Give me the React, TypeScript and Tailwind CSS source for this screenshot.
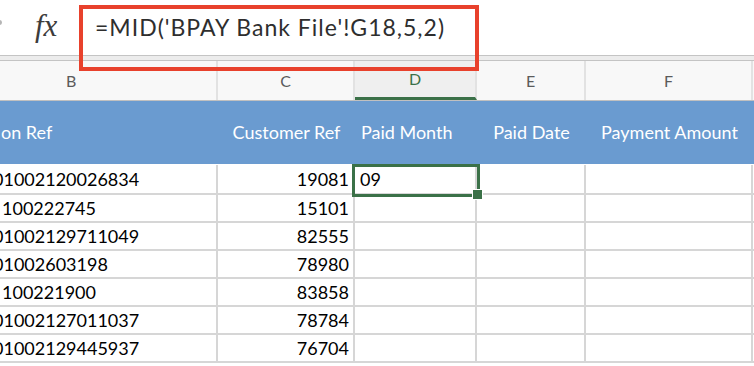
const rows = [
  { ref: "01002120026834", clipped: true, cust: "19081" },
  { ref: "100222745", clipped: false, cust: "15101" },
  { ref: "01002129711049", clipped: true, cust: "82555" },
  { ref: "01002603198", clipped: true, cust: "78980" },
  { ref: "100221900", clipped: false, cust: "83858" },
  { ref: "01002127011037", clipped: true, cust: "78784" },
  { ref: "01002129445937", clipped: true, cust: "76704" },
];

const font = { fontFamily: "Lato, 'Open Sans', sans-serif" };

export default function App() {
  return (
    <div
      className="relative h-[366px] w-[754px] overflow-hidden bg-white"
      style={font}
    >
      {/* formula bar */}
      <div className="relative flex h-[55px] items-center">
        <div className="absolute left-[-3px] top-[20px] h-[5px] w-[5px] rounded-full bg-[#b5b5b5]" />
        <span
          className="ml-[35px] w-[46px] pb-[2px] text-[31px] italic text-[#3c3c3c]"
          style={{ fontFamily: "'Liberation Serif', serif" }}
        >
          fx
        </span>
        <span className="ml-[14px] text-[23px] tracking-[1px] text-[#2e2e2e]">
          =MID('BPAY Bank File'!G18,5,2)
        </span>
      </div>
      <div className="h-[6px] border-y border-[#c4c4c4] bg-[#ececec]" />

      {/* column letters */}
      <div className="flex h-[40px] border-b border-[#c0c0c0] bg-[#f8f8f8] text-[16px] text-[#5b5b5b]">
        <div className="flex w-[218px] items-center border-r-2 border-[#e2e2e2] pl-[66px]">B</div>
        <div className="flex w-[137px] items-center justify-center border-r-2 border-[#e2e2e2]">C</div>
        <div className="flex w-[122px] items-center justify-center border-b-[3px] border-r-2 border-b-[#3b7148] border-r-[#e2e2e2] bg-[#efefef] text-[#3b7148]">
          D
        </div>
        <div className="flex w-[109px] items-center justify-center border-r-2 border-[#e2e2e2]">E</div>
        <div className="flex w-[167px] items-center justify-center border-r-2 border-[#e2e2e2]">F</div>
      </div>

      {/* table header */}
      <div className="flex h-[63px] items-center bg-[#6a9bd0] text-[18px] text-white">
        <div className="w-[218px] pl-[1px]">on Ref</div>
        <div className="w-[137px] text-center">Customer Ref</div>
        <div className="w-[122px] pl-[6px]">Paid Month</div>
        <div className="w-[109px] text-center">Paid Date</div>
        <div className="w-[167px] text-center">Payment Amount</div>
      </div>

      {/* data rows */}
      {rows.map((r, i) => (
        <div
          key={i}
          className={`flex border-b-2 border-[#d6d6d6] text-[18px] text-black ${
            i === 0 ? "h-[31px] pt-[1px]" : "h-[28px]"
          }`}
        >
          <div className="flex w-[218px] items-center overflow-hidden border-r-2 border-[#d6d6d6]">
            <span className={r.clipped ? "-ml-[7px]" : "ml-[2px]"}>{r.ref}</span>
          </div>
          <div className="flex w-[137px] items-center justify-end border-r-2 border-[#d6d6d6] pr-[4px]">
            {r.cust}
          </div>
          <div className="flex w-[122px] items-center border-r-2 border-[#d6d6d6] pl-[5px]">
            {i === 0 ? "09" : ""}
          </div>
          <div className="w-[109px] border-r-2 border-[#d6d6d6]" />
          <div className="w-[167px] border-r-2 border-[#d6d6d6]" />
        </div>
      ))}

      {/* selected cell */}
      <div className="absolute left-[352px] top-[164px] h-[33px] w-[128px] border-[3px] border-[#3b7148]" />
      <div className="absolute left-[472px] top-[189px] h-[11px] w-[11px] border border-white bg-[#3b7148]" />

      {/* annotation box */}
      <div className="absolute left-[79px] top-[5px] h-[66px] w-[400px] border-4 border-[#e8412c]" />
    </div>
  );
}
